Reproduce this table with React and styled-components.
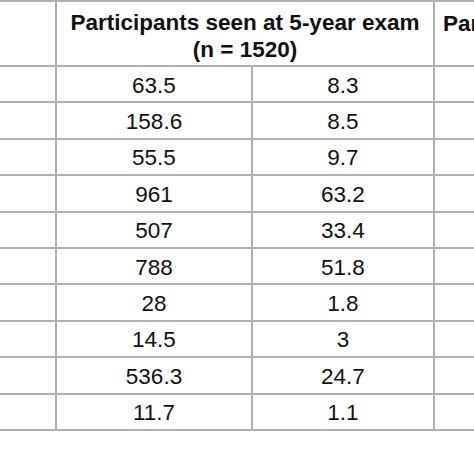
import React from 'react';
import styled, {createGlobalStyle} from 'styled-components';

const GlobalStyle = createGlobalStyle`
  html, body {
    margin: 0;
    padding: 0;
    background: #ffffff;
  }
  body {
    font-family: "Liberation Sans", Arial, Helvetica, sans-serif;
    color: #111111;
  }
`;

const Viewport = styled.div`
  width: 474px;
  height: 474px;
  overflow: hidden;
  background: #ffffff;
`;

const Table = styled.table`
  border-collapse: collapse;
  table-layout: fixed;
  width: 820px;
  border-top: 2px solid #b1b1b1;
  font-family: "Liberation Sans", Arial, Helvetica, sans-serif;
`;

const Cell = styled.td`
  border: 2px solid #b1b1b1;
  border-top: none;
  padding: 3px 0 0;
  height: 31.4px;
  font-size: 22.5px;
  text-align: center;
  vertical-align: middle;
  line-height: 24px;
  white-space: nowrap;
  overflow: hidden;
  color: #111111;
  &:first-child {
    border-left: none;
  }
`;

const HeadCell = styled.th`
  border: 2px solid #b1b1b1;
  border-top: none;
  height: 65px;
  padding: ${p => (p.$side ? '8px 0 0 8px' : '4px 0 0')};
  font-size: 22.5px;
  font-weight: bold;
  line-height: 27px;
  text-align: ${p => (p.$side ? 'left' : 'center')};
  vertical-align: ${p => (p.$side ? 'top' : 'middle')};
  white-space: nowrap;
  overflow: hidden;
  box-sizing: border-box;
  color: #111111;
  &:first-child {
    border-left: none;
  }
`;

const rows = [
  ['63.5', '8.3'],
  ['158.6', '8.5'],
  ['55.5', '9.7'],
  ['961', '63.2'],
  ['507', '33.4'],
  ['788', '51.8'],
  ['28', '1.8'],
  ['14.5', '3'],
  ['536.3', '24.7'],
  ['11.7', '1.1'],
];

export default function App() {
  return (
    <Viewport>
      <GlobalStyle />
      <Table>
        <colgroup>
          <col style={{width: 56}} />
          <col style={{width: 196}} />
          <col style={{width: 182}} />
          <col style={{width: 386}} />
        </colgroup>
        <thead>
          <tr>
            <HeadCell />
            <HeadCell colSpan={2}>
              Participants seen at 5-year exam
              <br />
              (n = 1520)
            </HeadCell>
            <HeadCell $side>Participants not seen</HeadCell>
          </tr>
        </thead>
        <tbody>
          {rows.map((r, i) => (
            <tr key={i}>
              <Cell />
              <Cell>{r[0]}</Cell>
              <Cell>{r[1]}</Cell>
              <Cell />
            </tr>
          ))}
        </tbody>
      </Table>
    </Viewport>
  );
}
